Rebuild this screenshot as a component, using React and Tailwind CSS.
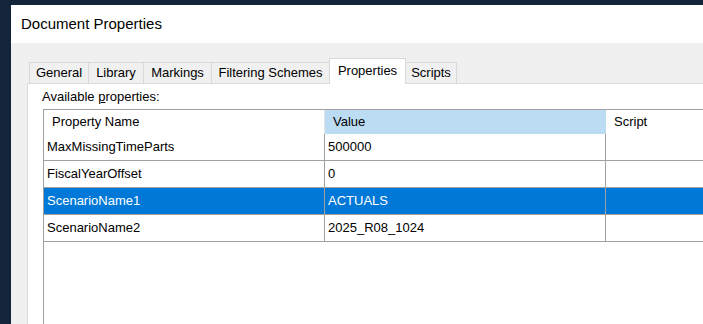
import React from "react";

const tabs = [
  { label: "General", w: "w-[59px]" },
  { label: "Library", w: "w-[55px]" },
  { label: "Markings", w: "w-[68px]" },
  { label: "Filtering Schemes", w: "w-[118px]" },
  { label: "Properties", w: "w-[77px]", active: true },
  { label: "Scripts", w: "w-[51px]" },
];

const rows = [
  { name: "MaxMissingTimeParts", value: "500000" },
  { name: "FiscalYearOffset", value: "0" },
  { name: "ScenarioName1", value: "ACTUALS", selected: true },
  { name: "ScenarioName2", value: "2025_R08_1024" },
];

export default function App() {
  return (
    <div
      className="w-[703px] h-[324px] overflow-hidden bg-[#14243a] pt-[5px] pl-[11px] flex"
      style={{ fontFamily: '"Liberation Sans", Arial, sans-serif' }}
    >
      <div className="flex-1 flex flex-col bg-white">
        {/* title */}
        <div className="h-[38px] flex items-center pl-[10px] text-[15px] text-black">
          Document Properties
        </div>

        {/* dialog body */}
        <div className="flex-1 flex flex-col bg-[#f0f0f0] pt-[15px] pl-[16px] overflow-hidden">
          <div className="flex items-end h-[25px] pl-[2px] text-[13px] text-black">
            {tabs.map((t, i) =>
              t.active ? (
                <div
                  key={t.label}
                  className={`${t.w} relative z-10 h-[26px] -mb-px flex items-center justify-center bg-white border border-b-0 border-[#d9d9d9] pb-[2px]`}
                >
                  {t.label}
                </div>
              ) : (
                <div
                  key={t.label}
                  className={`${t.w} h-[21px] flex items-center justify-center bg-[#f0f0f0] border-t border-[#d9d9d9] ${
                    i === tabs.length - 1 ? "border-r" : ""
                  } ${i === 0 ? "border-l" : ""} ${i > 0 && !tabs[i - 1].active ? "border-l" : ""}`}
                >
                  {t.label}
                </div>
              )
            )}
          </div>

          {/* tab page */}
          <div className="flex-1 bg-white border-t border-l border-[#d9d9d9] pt-[5px] pl-[14px] text-[13px] text-black">
            <div className="h-[16px] leading-[16px]">
              Available <span className="underline">p</span>roperties:
            </div>
            <div className="mt-[4px] ml-px w-[700px] h-[220px] border-t border-l border-[#a0a0a0]">
              {/* header */}
              <div className="flex h-[24px] items-center">
                <div className="w-[281px] h-full flex items-center pl-[8px] border-r border-[#e5e5e5]">
                  Property Name
                </div>
                <div className="w-[281px] h-full flex items-center pl-[8px] bg-[#bcdcf4]">
                  Value
                </div>
                <div className="flex-1 h-full flex items-center pl-[8px]">Script</div>
              </div>
              {rows.map((r) => (
                <div
                  key={r.name}
                  className={`flex h-[27px] border-b border-[#a0a0a0] ${
                    r.selected ? "bg-[#0078d7] text-white" : "bg-white"
                  }`}
                >
                  <div className="w-[281px] flex items-center pl-[3px] border-r border-[#a0a0a0]">
                    {r.name}
                  </div>
                  <div className="w-[281px] flex items-center pl-[3px] border-r border-[#a0a0a0]">
                    {r.value}
                  </div>
                  <div className="flex-1" />
                </div>
              ))}
            </div>
          </div>
        </div>
      </div>
    </div>
  );
}
